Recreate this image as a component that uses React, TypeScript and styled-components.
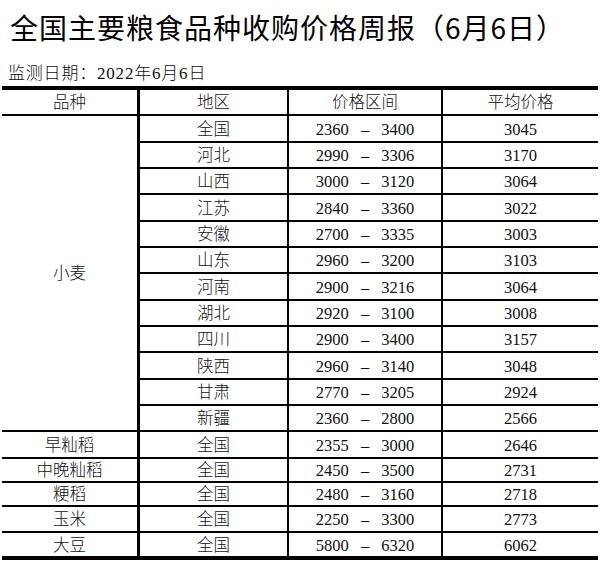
import React from "react";
import styled, { createGlobalStyle } from "styled-components";

const GlobalStyle = createGlobalStyle`
  * {
    box-sizing: border-box;
  }

  body {
    margin: 0;
    background: #fff;
    color: #000;
  }
`;

const Page = styled.div`
  width: 600px;
  height: 569px;
  padding-top: 13px;
`;

const Title = styled.h1`
  margin: 0 0 0 10px;
  font-family: "Noto Sans CJK SC", sans-serif;
  font-size: 28px;
  font-weight: 400;
  line-height: 28px;
  letter-spacing: 1px;
  white-space: nowrap;
`;

const DateLine = styled.p`
  margin: 0 0 0 8px;
  height: 45px;
  padding-top: 24px;
  font-family: "Liberation Serif", "Noto Sans CJK SC", serif;
  font-size: 17px;
  font-weight: 300;
  line-height: 17px;
  letter-spacing: 0.8px;
  color: #111;
`;

const Table = styled.div<{ $rows: string }>`
  margin: 0 2px;
  width: 596px;
  display: grid;
  grid-template-columns: 138px 149px 154px 155px;
  grid-template-rows: ${(p) => p.$rows};
  border-top: 4px solid #000;
`;

const Cell = styled.div<{ $col: number; $span?: number; $end?: boolean }>`
  display: flex;
  align-items: center;
  justify-content: center;
  padding-top: 3px;
  font-family: "Liberation Serif", "Noto Sans CJK SC", serif;
  font-size: 16.5px;
  font-weight: 300;
  line-height: 1;
  color: #111;
  white-space: pre;
  word-spacing: 8px;
  border-bottom: ${(p) => (p.$end ? 4 : 2)}px solid #000;
  border-right: ${(p) => (p.$col === 0 ? 3 : p.$col === 3 ? 0 : 2)}px solid #000;
  grid-row: ${(p) => (p.$span ? `span ${p.$span}` : "auto")};
`;

type Row = { region: string; low: number; high: number; avg: number };

const wheat: Row[] = [
  { region: "全国", low: 2360, high: 3400, avg: 3045 },
  { region: "河北", low: 2990, high: 3306, avg: 3170 },
  { region: "山西", low: 3000, high: 3120, avg: 3064 },
  { region: "江苏", low: 2840, high: 3360, avg: 3022 },
  { region: "安徽", low: 2700, high: 3335, avg: 3003 },
  { region: "山东", low: 2960, high: 3200, avg: 3103 },
  { region: "河南", low: 2900, high: 3216, avg: 3064 },
  { region: "湖北", low: 2920, high: 3100, avg: 3008 },
  { region: "四川", low: 2900, high: 3400, avg: 3157 },
  { region: "陕西", low: 2960, high: 3140, avg: 3048 },
  { region: "甘肃", low: 2770, high: 3205, avg: 2924 },
  { region: "新疆", low: 2360, high: 2800, avg: 2566 },
];

const others: (Row & { grain: string })[] = [
  { grain: "早籼稻", region: "全国", low: 2355, high: 3000, avg: 2646 },
  { grain: "中晚籼稻", region: "全国", low: 2450, high: 3500, avg: 2731 },
  { grain: "粳稻", region: "全国", low: 2480, high: 3160, avg: 2718 },
  { grain: "玉米", region: "全国", low: 2250, high: 3300, avg: 2773 },
  { grain: "大豆", region: "全国", low: 5800, high: 6320, avg: 6062 },
];

// row heights measured from the print, border included
const rowHeights = [26, 27, 26, 26, 27, 26, 26, 27, 26, 26, 27, 26, 26, 27, 24, 24, 26, 27];

const range = (r: Row) => `${r.low} – ${r.high}`;

export default function App() {
  return (
    <Page>
      <GlobalStyle />
      <Title>全国主要粮食品种收购价格周报（6月6日）</Title>
      <DateLine>监测日期：2022年6月6日</DateLine>
      <Table $rows={rowHeights.map((h) => `${h}px`).join(" ")}>
        <Cell $col={0}>品种</Cell>
        <Cell $col={1}>地区</Cell>
        <Cell $col={2}>价格区间</Cell>
        <Cell $col={3}>平均价格</Cell>

        <Cell $col={0} $span={wheat.length} style={{ gridColumn: 1 }}>
          小麦
        </Cell>
        {wheat.map((r) => (
          <React.Fragment key={r.region}>
            <Cell $col={1}>{r.region}</Cell>
            <Cell $col={2}>{range(r)}</Cell>
            <Cell $col={3}>{r.avg}</Cell>
          </React.Fragment>
        ))}

        {others.map((r, i) => {
          const end = i === others.length - 1;
          return (
            <React.Fragment key={r.grain}>
              <Cell $col={0} $end={end}>{r.grain}</Cell>
              <Cell $col={1} $end={end}>{r.region}</Cell>
              <Cell $col={2} $end={end}>{range(r)}</Cell>
              <Cell $col={3} $end={end}>{r.avg}</Cell>
            </React.Fragment>
          );
        })}
      </Table>
    </Page>
  );
}
